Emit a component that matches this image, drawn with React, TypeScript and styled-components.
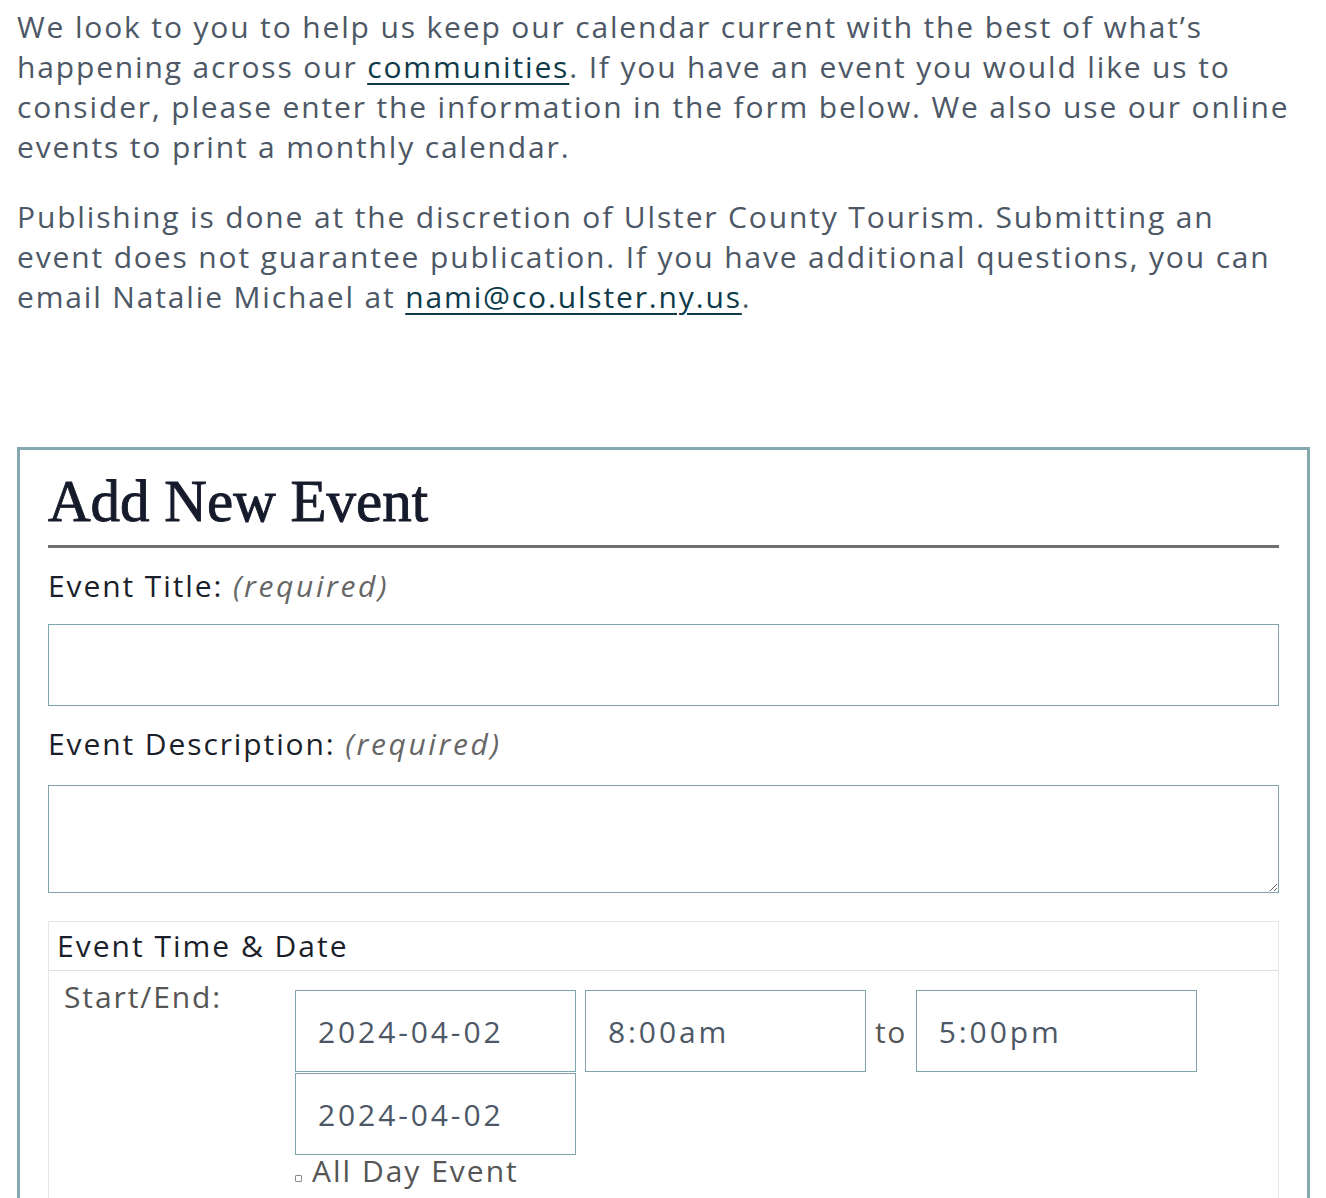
import styled, { createGlobalStyle } from "styled-components";

const GlobalStyle = createGlobalStyle`
  html, body {
    margin: 0;
    padding: 0;
    background: #ffffff;
  }
  body {
    font-family: "Open Sans", "Liberation Sans", sans-serif;
  }
`

const App = () => {
    return (
        <>
            <GlobalStyle />
            <Page>
                <Intro>
                    We look to you to help us keep our calendar current with the best of what’s<br />
                    happening across our <Link href="#">communities</Link>. If you have an event you would like us to<br />
                    consider, please enter the information in the form below. We also use our online<br />
                    events to print a monthly calendar.
                </Intro>
                <Intro $last>
                    Publishing is done at the discretion of Ulster County Tourism. Submitting an<br />
                    event does not guarantee publication. If you have additional questions, you can<br />
                    email Natalie Michael at <Link href="#">nami@co.ulster.ny.us</Link>.
                </Intro>

                <FormBox>
                    <Heading>Add New Event</Heading>
                    <Rule />

                    <Label>
                        Event Title: <Req>(required)</Req>
                    </Label>
                    <TextInput type="text" />

                    <Label>
                        Event Description: <Req>(required)</Req>
                    </Label>
                    <TextArea />

                    <Fieldset>
                        <Legend>Event Time &amp; Date</Legend>
                        <Row>
                            <RowLabel>Start/End:</RowLabel>
                            <Cell>
                                <Line>
                                    <SmallInput type="text" defaultValue="2024-04-02" />
                                    <SmallInput type="text" defaultValue="8:00am" />
                                    <To>to</To>
                                    <SmallInput type="text" defaultValue="5:00pm" />
                                </Line>
                                <Line>
                                    <SmallInput type="text" defaultValue="2024-04-02" />
                                </Line>
                                <Check>
                                    <Box />
                                    <CheckText>All Day Event</CheckText>
                                </Check>
                            </Cell>
                        </Row>
                    </Fieldset>
                </FormBox>
            </Page>
        </>
    )
}

export default App;

const Page = styled.div`
    padding: 7px 16px 0 17px;
    height: 1198px;
    box-sizing: border-box;
    overflow: hidden;
`

const Intro = styled.p<{ $last?: boolean }>`
    margin: 0 0 ${p => p.$last ? '130px' : '30px'};
    font-size: 30px;
    letter-spacing: 1.85px;
    line-height: 40px;
    white-space: nowrap;
    color: #4d5866;
`

const Link = styled.a`
    color: #0e3a4a;
    text-decoration: underline;
    text-underline-offset: 5px;
    text-decoration-thickness: 2px;
`

const FormBox = styled.div`
    border: 3px solid #85a8ae;
    padding: 20px 28px 0;
    height: 760px;
    box-sizing: border-box;
`

const Heading = styled.h2`
    margin: 0;
    font-family: "Liberation Serif", serif;
    font-weight: 400;
    font-size: 59px;
    line-height: 62px;
    color: #161b2b;
    -webkit-text-stroke: 0.9px #161b2b;
`

const Rule = styled.div`
    height: 3px;
    background: #6f6f6f;
    margin: 13px 0 18px;
`

const Label = styled.div`
    font-size: 30px;
    letter-spacing: 1.9px;
    line-height: 40px;
    color: #1b1f2a;
    margin-bottom: 18px;
`

const Req = styled.span`
    font-style: italic;
    letter-spacing: 2.6px;
    color: #666666;
`

const TextInput = styled.input`
    display: block;
    width: 100%;
    height: 82px;
    box-sizing: border-box;
    border: 1px solid #7fa4aa;
    margin: 0 0 18px;
    outline: none;
`

const TextArea = styled.textarea`
    display: block;
    width: 100%;
    height: 108px;
    box-sizing: border-box;
    border: 1px solid #7fa4aa;
    margin: 21px 0 28px;
    outline: none;
`

const Fieldset = styled.div`
    border: 1px solid #e6e6e6;
    height: 400px;
`

const Legend = styled.div`
    font-size: 30px;
    letter-spacing: 2px;
    line-height: 48px;
    padding-left: 8px;
    color: #1b1f2a;
    border-bottom: 1px solid #e0e0e0;
`

const Row = styled.div`
    display: grid;
    grid-template-columns: 246px 1fr;
    padding: 8px 0 0;
`

const RowLabel = styled.div`
    font-size: 30px;
    letter-spacing: 1.9px;
    line-height: 36px;
    padding-left: 15px;
    color: #555555;
`

const Cell = styled.div`
    display: flex;
    flex-direction: column;
    gap: 1px;
    padding-top: 11px;
`

const Line = styled.div`
    display: flex;
    align-items: center;
    gap: 9px;
`

const SmallInput = styled.input`
    width: 281px;
    height: 82px;
    box-sizing: border-box;
    border: 1px solid #7fa4aa;
    padding: 0 22px;
    font-family: "Open Sans", "Liberation Sans", sans-serif;
    font-size: 30px;
    letter-spacing: 2.9px;
    color: #4d5866;
    outline: none;
`

const To = styled.span`
    font-size: 30px;
    letter-spacing: 1.5px;
    color: #555555;
`

const Check = styled.label`
    display: flex;
    align-items: flex-end;
    gap: 10px;
    line-height: 30px;
`

const Box = styled.span`
    width: 5px;
    height: 5px;
    border: 1px solid #888888;
    border-radius: 1px;
    margin-bottom: 4px;
`

const CheckText = styled.span`
    font-size: 30px;
    letter-spacing: 2px;
    color: #555555;
`
